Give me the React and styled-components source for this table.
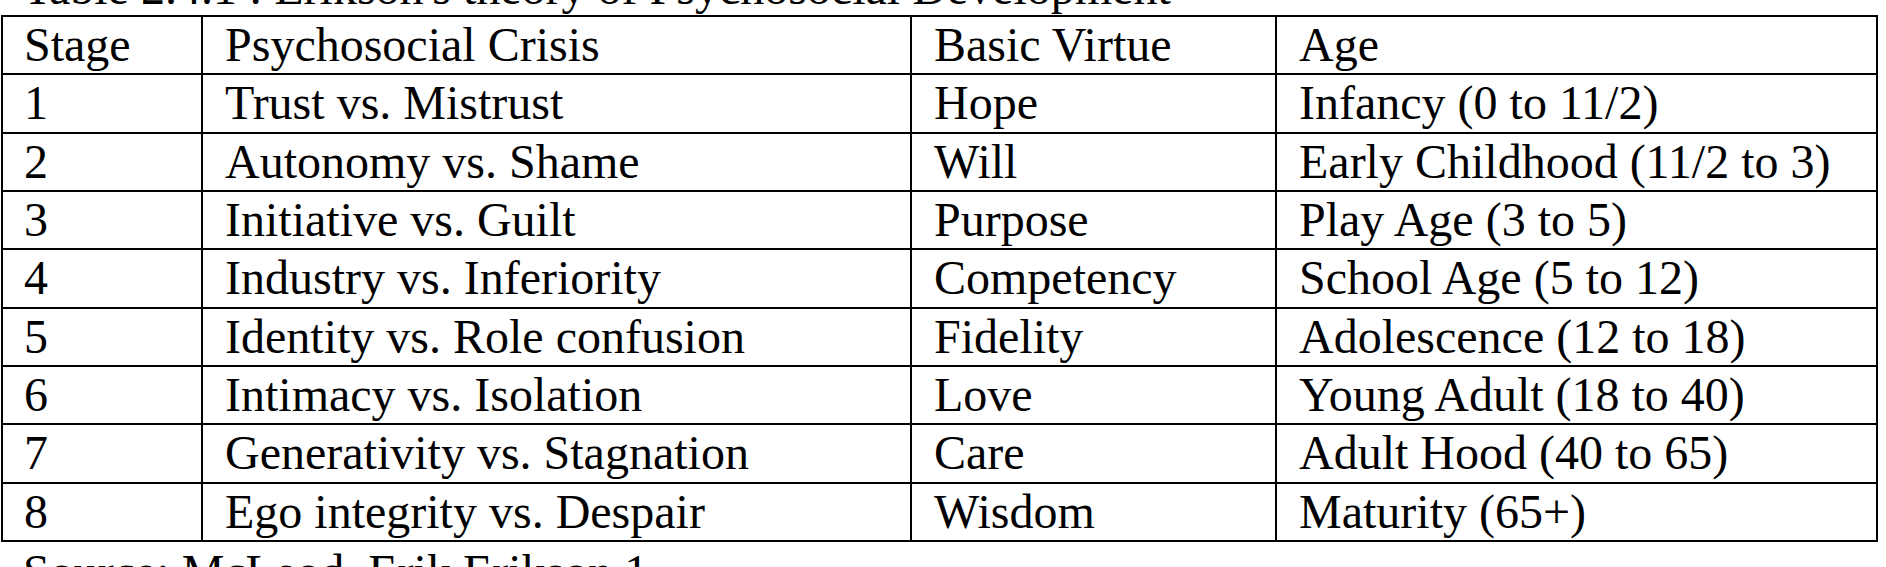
import React from 'react';
import styled, { createGlobalStyle } from 'styled-components';

const GlobalStyle = createGlobalStyle`
	html, body {
		margin: 0;
		padding: 0;
		background: #fff;
		overflow: hidden;
	}
	body {
		font-family: "Liberation Serif", "Times New Roman", serif;
		color: #000;
	}
`

const Page = styled.div`
	width: 1886px;
	height: 567px;
	overflow: hidden;
	padding-left: 1px;
	box-sizing: border-box;
	display: flex;
	flex-direction: column;
`

const Caption = styled.div`
	font-size: 48px;
	line-height: 48px;
	margin-top: -36px;
	padding-left: 22px;
	white-space: nowrap;
`

const Grid = styled.div`
	display: grid;
	grid-template-columns: 200px 709px 365px 601px;
	grid-auto-rows: 58.33px;
	width: max-content;
	margin-top: 3px;
	border-left: 2px solid #000;
	border-top: 2px solid #000;
`

const Cell = styled.div`
	box-sizing: border-box;
	border-right: 2px solid #000;
	border-bottom: 2px solid #000;
	padding-left: ${({ first }) => first ? '21px' : '22px'};
	font-size: 48px;
	line-height: 56px;
	white-space: nowrap;
	overflow: hidden;
`

const Source = styled.div`
	font-size: 48px;
	line-height: 48px;
	margin-top: 6.5px;
	padding-left: 22px;
	white-space: nowrap;
`

const header = ['Stage', 'Psychosocial Crisis', 'Basic Virtue', 'Age'];

const rows = [
	['1', 'Trust vs. Mistrust', 'Hope', 'Infancy (0 to 11/2)'],
	['2', 'Autonomy vs. Shame', 'Will', 'Early Childhood (11/2 to 3)'],
	['3', 'Initiative vs. Guilt', 'Purpose', 'Play Age (3 to 5)'],
	['4', 'Industry vs. Inferiority', 'Competency', 'School Age (5 to 12)'],
	['5', 'Identity vs. Role confusion', 'Fidelity', 'Adolescence (12 to 18)'],
	['6', 'Intimacy vs. Isolation', 'Love', 'Young Adult (18 to 40)'],
	['7', 'Generativity vs. Stagnation', 'Care', 'Adult Hood (40 to 65)'],
	['8', 'Ego integrity vs. Despair', 'Wisdom', 'Maturity (65+)'],
];

export default function App() {
	return (
		<>
			<GlobalStyle />
			<Page>
				<Caption>Table 2.4.1 : Erikson's theory of Psychosocial Development</Caption>
				<Grid>
					{header.map((h, i) => <Cell key={h} first={i === 0}>{h}</Cell>)}
					{rows.map(row => row.map((text, i) => (
						<Cell key={row[0] + '-' + i} first={i === 0}>{text}</Cell>
					)))}
				</Grid>
				<Source>Source: McLeod, Erik Erikson 1</Source>
			</Page>
		</>
	);
}
